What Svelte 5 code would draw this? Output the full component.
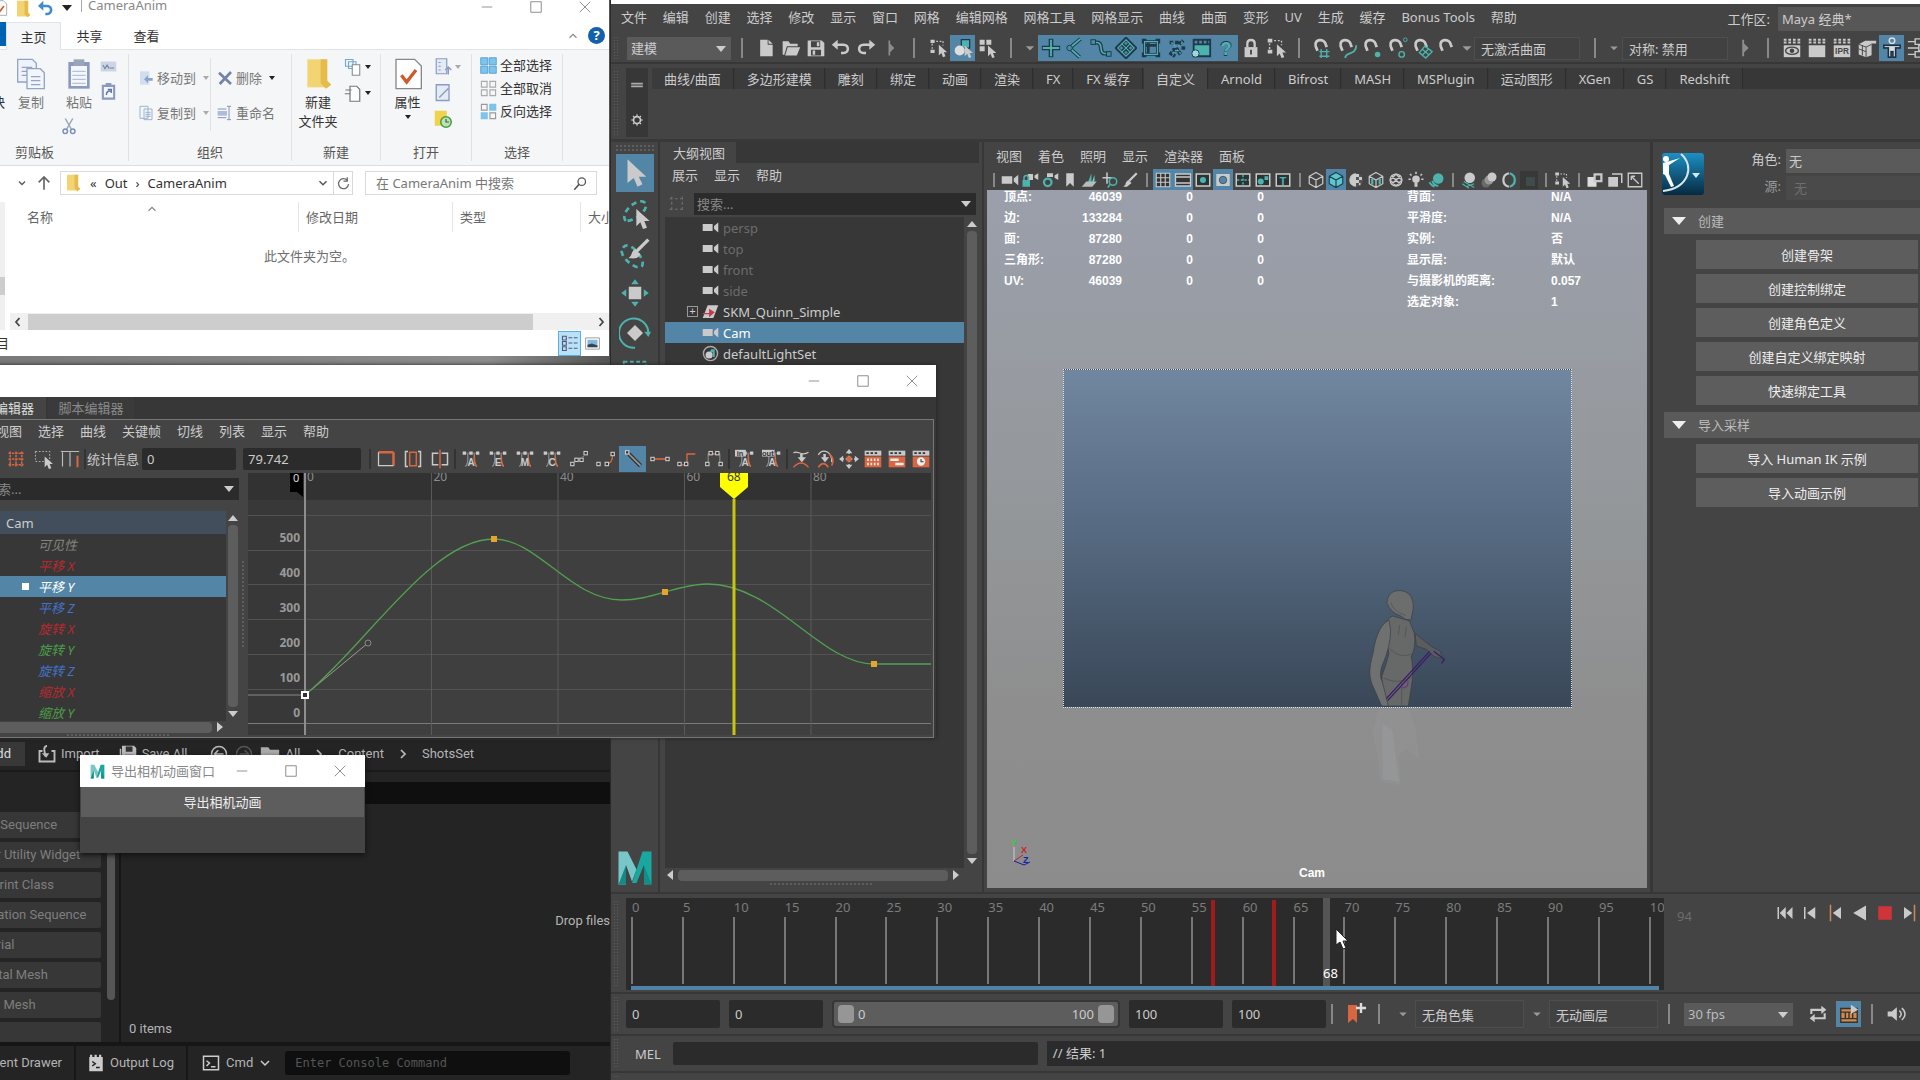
<script>
  const menus = ["文件", "编辑", "创建", "选择", "修改", "显示", "窗口", "网格", "编辑网格", "网格工具", "网格显示", "曲线", "曲面", "变形", "UV", "生成", "缓存", "Bonus Tools", "帮助"];
  const shelfTabs = ["曲线/曲面", "多边形建模", "雕刻", "绑定", "动画", "渲染", "FX", "FX 缓存", "自定义", "Arnold", "Bifrost", "MASH", "MSPlugin", "运动图形", "XGen", "GS", "Redshift"];

  const fileTools = ["sep", "newFile", "open", "save", "undo", "redo", "fold", "sep", "selHier", "*selObj", "selComp", "sep", "drop"];
  const maskTools = ["*plus", "*joint", "*curve", "*surface", "*deform", "*particle", "*render", "*question", "lock", "selHier", "sep"];
  const snapTools = ["magGrid", "magCurve", "magPoint", "magCenter", "magPlane", "magnet", "drop"];
  const renderTools = ["fold", "sep", "clapEye", "clap", "clapIpr", "cubeTool", "*human", "sliders"];
  const viewTools = [
    "sep", "camera", "camLock", "camGear", "bookmark", "plane", "panZoom", "pencil",
    "sep", "*gridBox", "*film", "resGate", "*gateMask", "fieldChart", "safe", "title",
    "sep", "wire", "*solid", "half", "texCube", "checker", "bulb", "shadow",
    "sep", "ao", "motion", "aa", "darkBox", "sep", "selHier", "sep", "layersA", "layersB", "expose",
  ];
  const graphTools = [
    "sep", "gBox", "gBracket", "gCenter", "sep", "tA", "tE", "tM", "tC", "spline", "clampT", "*linear", "flat", "stepT", "plateau",
    "sep", "inA", "outA", "sep", "buffer", "swap", "moveKey", "dopeA", "dopeB", "dopeC",
  ];

  const outliner = [
    { name: "persp", icon: "camera", dim: true },
    { name: "top", icon: "camera", dim: true },
    { name: "front", icon: "camera", dim: true },
    { name: "side", icon: "camera", dim: true },
    { name: "SKM_Quinn_Simple", icon: "mesh", plus: true },
    { name: "Cam", icon: "camera", selected: true },
    { name: "defaultLightSet", icon: "lightSet" },
  ];

  const channels = [
    { name: "可见性", color: "#85857c" },
    { name: "平移 X", color: "#b52a30" },
    { name: "平移 Y", color: "#ffffff", selected: true },
    { name: "平移 Z", color: "#4472c8" },
    { name: "旋转 X", color: "#b52a30" },
    { name: "旋转 Y", color: "#4c9c48" },
    { name: "旋转 Z", color: "#4472c8" },
    { name: "缩放 X", color: "#b52a30" },
    { name: "缩放 Y", color: "#4c9c48" },
  ];

  const polyStats = [
    ["顶点:", "46039"],
    ["边:", "133284"],
    ["面:", "87280"],
    ["三角形:", "87280"],
    ["UV:", "46039"],
  ];
  const objStats = [
    ["背面:", "N/A"],
    ["平滑度:", "N/A"],
    ["实例:", "否"],
    ["显示层:", "默认"],
    ["与摄影机的距离:", "0.057"],
    ["选定对象:", "1"],
  ];

  const createButtons = ["创建骨架", "创建控制绑定", "创建角色定义", "创建自定义绑定映射", "快速绑定工具"];
  const importButtons = ["导入 Human IK 示例", "导入动画示例"];
  const assetTypes = ["Level Sequence", "Editor Utility Widget", "Blueprint Class", "Animation Sequence", "Material", "Skeletal Mesh", "Static Mesh", ""];

  // time slider
  const frames = Array.from({ length: 21 }, (_, i) => i * 5);
  const keys = [57, 63];
  const current = 68;
  const at = (frame) => (frame / 101) * 100;

  // graph editor grid
  const graphTimes = [0, 20, 40, 60, 80];
  const graphValues = [500, 400, 300, 200, 100, 0];
  const graphLines = [42, 77, 111, 146, 181, 216];

  const W = "#cacaca";
  const T = "#4db3ae";
  const O = "#d96640";
  const D = "#20384a";
  const line = (d, c = W, w = 2) => `<path d="${d}" fill="none" stroke="${c}" stroke-width="${w}"/>`;
  const fill = (d, c = W) => `<path d="${d}" fill="${c}"/>`;
  const text = (t, x, y, s, c = W) => `<text x="${x}" y="${y}" font-size="${s}" font-weight="700" fill="${c}" font-family="Liberation Sans, sans-serif" text-anchor="middle">${t}</text>`;
  const arrowAt = (x, y) => fill(`M${x} ${y}v13l3-3 2 5 3-1-2-5h4z`);
  const mag = line("M6 15 4 10C2 2 13 1 15 8l1 3", W, 3);
  const tangent = (l) => line("M5 21Q9 19 8 6M19 21Q15 19 16 6", "#8c8c8c", 1.5) + line("M19 21Q16 18 16 7", O, 1.5) + line("M3 5H21", "#999", 1) + fill("M2 3h4v4H2zM10 3h4v4h-4zM18 3h4v4h-4z") + text(l, 12, 20, 12);
  const knot = (x, y) => `<rect x="${x}" y="${y}" width="4" height="4" fill="#333" stroke="#ccc" stroke-width="1.3"/>`;
  const clapTop = fill("M3 9h18v13H3z") + line("M3 6h18M3 3h18", W, 2).replace("/>", ' stroke-dasharray="3 2"/>');
  const cube = line("M12 2 21 7v10l-9 5-9-5V7zM3 7l9 5 9-5M12 12v10", W, 1.6);
  const box = (c) => `<rect x="3" y="4" width="18" height="16" fill="#2a3434" stroke="${c}" stroke-width="2"/>`;
  const dope = fill("M2 2h20v6H2z") + fill("M2 9h20v13H2z", O) + fill("M4 4h3v2H4zM9 4h3v2H9zM14 4h3v2h-3z", "#333");
  const cam = fill("M1 7h14v10H1zM17 10l6-5v14l-6-5z");

  const icons = {
    newFile: fill("M5 2h9v6h6v14H5zM15 2l5 5h-5z"),
    open: fill("M2 4h7l2 3h9v3H7L4 20H2zM8 11h15l-4 10H5z"),
    save: fill("M2 3h17l3 3v16H2z") + fill("M6 4h11v7H6zM6 14h12v7H6z", "#444") + fill("M13 5h3v5h-3zM8 15h3v5H8z"),
    undo: line("M6 8h9c7 0 7 10 0 10h-3", W, 3) + fill("M8 2v12L1 8z"),
    redo: line("M18 8H9c-7 0-7 10 0 10h3", W, 3) + fill("M16 2v12l7-6z"),
    drop: fill("M7 10h10l-5 5z", "#999"),
    fold: fill("M9 3h2v18H9zM11 7l5 5-5 5z", "#8c8c8c"),
    selHier: fill("M3 2h5v4H3zM3 14h5v4H3z") + line("M10 4h8v5M5 7v6", W, 1.5).replace("/>", ' stroke-dasharray="2 2"/>') + arrowAt(13, 8),
    selObj: fill("M10 2h10v10H10z", T) + line("M10 2h10v10H10z", D, 1.5) + `<circle cx="8" cy="15" r="6" fill="#ddd"/>` + arrowAt(14, 9),
    selComp: fill("M2 2h6v6H2zM10 2h6v6h-6zM2 10h6v6H2z") + arrowAt(12, 9),
    plus: line("M12 2v20M2 12h20", D, 5) + line("M12 3v18M3 12h18", T, 2),
    joint: line("M17 2 5 12l11 10", D, 4) + line("M17 2 5 12l11 10", T, 2) + `<circle cx="5" cy="12" r="3" fill="#3f92a0" stroke="${D}"/>`,
    curve: line("M2 6h6c7 0 1 12 8 12h6", D, 4.5) + line("M2 6h6c7 0 1 12 8 12h6", T, 1.8) + `<rect x="1" y="3" width="5" height="5" fill="#3f92a0" stroke="${D}"/><rect x="18" y="16" width="5" height="5" fill="#3f92a0" stroke="${D}"/>`,
    surface: line("M12 2 22 12 12 22 2 12zM7 7l10 10M17 7 7 17", D, 4) + line("M12 3 21 12 12 21 3 12zM7 7l10 10M17 7 7 17", T, 1.2),
    deform: line("M5 5h14v14H5zM5 9h14M9 5v14", D, 3) + fill("M2 2h5v5H2zM17 2h5v5h-5zM2 17h5v5H2zM17 17h5v5h-5z", D) + line("M5 5h14v14H5z", T, 1.2),
    particle: line("M5 6h5M8 14h6M15 8l5-4M17 19l-5-7M5 17l6 4M18 12h4M13 4v5", D, 4).replace("/>", ' stroke-dasharray="4 1"/>') + line("M7 6l5 5M8 18l6-5M19 6l-5 5M17 18l-4-4", T, 1.6).replace("/>", ' stroke-dasharray="2 2"/>'),
    render: fill("M4 8h18v13H4z", T) + line("M4 3h18v18H4zM4 8h18M9 3v5M14 3v5M19 3v5", D, 2) + `<circle cx="6" cy="18" r="4" fill="#9ed8dd" stroke="${D}"/>`,
    question: text("?", 12, 21, 24, D) + text("?", 12, 20, 20, T),
    lock: line("M8 11V7c0-5 8-5 8 0v4", W, 2.5) + fill("M5 11h14v11H5z") + fill("M11 14h2v5h-2z", "#444"),
    magnet: mag,
    magGrid: mag + line("M10 13v10M16 13v10M8 16h11M8 21h11", T, 1.5),
    magCurve: mag + line("M9 23c0-8 12-2 12-14", T, 2),
    magPoint: mag + `<circle cx="17" cy="19" r="3" fill="${T}"/>`,
    magCenter: mag + `<circle cx="16" cy="19" r="3" fill="none" stroke="${T}" stroke-width="1.5"/><circle cx="20" cy="3" r="2" fill="none" stroke="${T}"/>`,
    magPlane: mag + line("M14 10l8 6-7 7-7-6zM18 13l-7 7M11 13l8 7", T, 1.5),
    clap: clapTop,
    clapEye: clapTop + `<ellipse cx="12" cy="15" rx="7" ry="4" fill="none" stroke="#444" stroke-width="1.5"/><circle cx="12" cy="15" r="2.5" fill="#444"/>`,
    clapIpr: clapTop + text("IPR", 12, 19, 9, "#444"),
    cubeTool: fill("M3 8l7-4h12v3h-5v13l-6 2-8-3z") + line("M3 8l8 3v11M3 13l8 3M7 9v11M11 11l6-3", "#444", 1),
    human: `<circle cx="12" cy="4" r="3" fill="none" stroke="#ddd" stroke-width="1.6"/>` + line("M3 9h18v3h-5v10h-3v-6h-2v6H8V12H3z", "#1d2f3c", 1.6) + fill("M4 10h16v1h-5v10h-1v-6h-4v6H9V11H4z", "#ddd"),
    sliders: line("M2 5h8M18 5h6M2 12h12M2 19h8M18 19h6", W, 1.5) + line("M10 2h8v6h-8zM14 9h8v6h-8zM10 16h8v6h-8z", W, 1.5),
    camera: cam,
    camLock: fill("M9 4h7v8H9zM18 6l5-3v9l-5-3z") + line("M4 12V9c0-4 6-4 6 0v3", T, 2) + fill("M2 12h10v9H2z", T),
    camGear: fill("M8 3h8v5H8zM18 6l5-3v9l-5-3z") + `<circle cx="9" cy="15" r="5" fill="none" stroke="${T}" stroke-width="3"/>`,
    bookmark: fill("M7 3h10v18l-5-5-5 5z"),
    plane: fill("M8 18 14 3v14z", T) + fill("M1 21l6-7h14l-6 7z", "#bbb") + fill("M13 20l5-7V5z", "#80cfc9"),
    panZoom: line("M8 2v15M2 9h13", W, 2) + `<circle cx="16" cy="14" r="5" fill="#444" stroke="${T}" stroke-width="2"/>` + line("M12 18l-3 4", T, 2),
    pencil: line("M21 3 11 13", W, 3) + fill("M10 12l4 4-6 5H3l3-3c0-3 2-5 4-6z"),
    gridBox: `<rect x="3" y="3" width="18" height="18" fill="#333"/>` + line("M3 3h18v18H3zM9 3v18M15 3v18M3 9h18M3 15h18", W, 1.5),
    film: `<rect x="2" y="4" width="20" height="16" fill="#333"/>` + line("M2 4h20v16H2zM3 8h18M3 16h18", W, 1.8),
    resGate: box(W) + `<circle cx="12" cy="12" r="4" fill="${T}"/>`,
    gateMask: fill("M3 4h18v16H3z") + `<circle cx="12" cy="12" r="5" fill="#4e86ad" stroke="#444"/>`,
    fieldChart: box(W) + line("M12 5v14M4 12h16", T, 2).replace("/>", ' stroke-dasharray="3 2"/>'),
    safe: box(W) + fill("M14 7h5v5h-5z", T) + `<circle cx="9" cy="14" r="4" fill="${T}"/>`,
    title: box(W) + text("T", 12, 18, 15, T),
    wire: cube,
    solid: fill("M12 2 21 7v10l-9 5-9-5V7z", "#5fc4cc") + line("M12 2 21 7v10l-9 5-9-5V7zM3 7l9 5 9-5M12 12v10", "#17424f", 1.5),
    half: `<circle cx="12" cy="12" r="9" fill="#555"/>` + fill("M12 3a9 9 0 0 0 0 18z") + fill("M12 4h4v4h-4zM16 8h4v4h-4zM12 12h4v4h-4zM16 16h2v3h-2z"),
    texCube: cube + line("M7 10v8M17 10v8", T, 3),
    checker: `<circle cx="12" cy="12" r="8" fill="none" stroke="${W}" stroke-width="1.5"/>` + line("M6 6l12 12M4 12l8 8M12 4l8 8M18 6 6 18M12 4 4 12M20 12l-8 8", W, 2),
    bulb: `<circle cx="12" cy="11" r="5" fill="${W}"/>` + fill("M10 16h4v5h-4z") + line("M12 1v3M2 11h3M19 11h3M4 4l2 2M20 4l-2 2", W, 2),
    shadow: `<circle cx="15" cy="10" r="7" fill="${T}"/>` + line("M7 13c1 4 3 6 8 7M3 15c2 3 4 5 7 6", T, 2.5),
    ao: `<circle cx="13" cy="9" r="7" fill="${W}"/>` + line("M5 14l14 8M3 17l9 6M8 21l11-4", T, 1.5),
    motion: `<circle cx="8" cy="16" r="6" fill="#6a6a6a"/><circle cx="12" cy="12" r="6" fill="#969696"/><circle cx="16" cy="8" r="6" fill="${W}"/>`,
    aa: line("M12 3C2 5 2 19 12 21", W, 3) + line("M13 3c9 3 9 15 0 18", T, 3),
    darkBox: fill("M0 0h24v24H0z", "#383838") + fill("M8 8h12v12H8z", "#404b4b"),
    layersA: fill("M2 8h12v13H2z", "#ddd") + fill("M10 3h12v12H10z") + fill("M13 6h6v6h-6z", "#444"),
    layersB: line("M8 4h13v12", W, 2) + fill("M3 8h13v13H3z"),
    expose: line("M3 3h18v18H3zM7 7l10 10M7 7h5M7 7v5", W, 1.8),
    mesh: fill("M8 3h15l-7 18H1z") + fill("M1 14h9V8l8 5-8 7v-4H1z", "#c33b4c"),
    lightSet: `<circle cx="12" cy="12" r="10" fill="none" stroke="#aaa" stroke-width="2"/><circle cx="10" cy="14" r="5" fill="#ccc"/>` + fill("M13 6h5v11h-3v-7h-4z", T),
    lasso: line("M5 18C0 12 14 0 19 4s-6 14-14 14", T, 2).replace("/>", ' stroke-dasharray="4 3"/>') + arrowAt(13, 9),
    paintSel: line("M3 8c5-7 18 10 14 14S-2 13 3 8", T, 2).replace("/>", ' stroke-dasharray="4 3"/>') + line("M22 2 13 11", W, 2.5) + fill("M12 9l4 4c-2 4-5 3-9 3 3-2 2-5 5-7z"),
    move: fill("M7 7h10v10H7z") + fill("M12 1l3 4H9zM12 23l3-4H9zM1 12l4-3v6zM23 12l-4-3v6z", T),
    rotate: fill("M12 6l6 6-6 6-6-6z") + line("M12 23A11 11 0 1 1 22 12", T, 1.5) + fill("M19 11h5l-2 4z", T),
    scale: line("M3 3h18v18H3z", T, 1.5).replace("/>", ' stroke-dasharray="3 2"/>'),
    cursor: fill("M6 1v19l5-4 3 7 4-2-3-6h6z"),
    frameSel: line("M5 2v20M19 2v20M2 5h20M2 19h20", "#707070", 1.5).replace("/>", ' stroke-dasharray="4 3"/>'),
    gear: `<circle cx="12" cy="12" r="6" fill="none" stroke="${W}" stroke-width="3"/>` + line("M12 2v4M12 18v4M2 12h4M18 12h4M5 5l3 3M16 16l3 3M19 5l-3 3M5 19l3-3", W, 2),
    bars: fill("M2 8h20v3H2zM2 13h20v3H2z", "#aaa"),
    gBox: line("M3 4h18M21 4v16", O, 3) + line("M3 4v16h18", W, 1.5),
    gBracket: line("M6 3H3v18h3M18 3h3v18h-3", W, 1.8) + line("M8 4h8v16H8z", O, 1.8),
    gCenter: line("M10 5H3v14h7M14 5h7v14h-7", W, 1.8) + line("M12 1v22", O, 1.8),
    tA: tangent("A"),
    tE: tangent("E"),
    tM: tangent("M"),
    tC: tangent("C"),
    spline: line("M4 18l6-6h5l5-7", "#999", 1.2).replace("/>", ' stroke-dasharray="2 2"/>') + knot(2, 16) + knot(7, 11) + knot(13, 11) + knot(18, 3),
    clampT: line("M12 18c6 0 8-4 8-12", O, 1.5) + knot(1, 16) + knot(11, 16) + knot(18, 4),
    linear: line("M7 6l14 14", "#333", 5) + line("M7 6l14 14", "#999", 2) + knot(3, 2),
    flat: line("M4 12h16", O, 2) + knot(1, 10) + knot(19, 10),
    stepT: line("M4 19h8V6h10", O, 1.6) + knot(1, 16) + knot(9, 16),
    plateau: line("M5 19V6h14v13", "#888", 1.4) + line("M8 6h8", O, 1.6) + knot(2, 16) + knot(6, 3) + knot(14, 3) + knot(18, 16),
    inA: tangent("A") + fill("M0 1h13v8H0z", W) + text("in", 6, 8, 9, "#333"),
    outA: tangent("A") + fill("M0 1h15v8H0z", W) + text("out", 7, 8, 9, "#333"),
    buffer: line("M3 5c4-5 9 5 18-1", W, 1.4) + fill("M11 6h3v4h4l-5 6-5-6h3z") + line("M3 22c6-7 12-7 18 0", O, 1.6),
    swap: line("M4 7c4-7 14-6 16 5v4", W, 1.5) + fill("M10 6h3v4h4l-5 6-5-6h3z") + line("M4 22c4-6 8-6 12 0M17 6c5 4 6 8 3 14", O, 2),
    moveKey: line("M12 3v18M3 12h18", W, 1.6).replace("/>", ' stroke-dasharray="3 2"/>') + fill("M12 0l4 5H8zM12 24l4-5H8zM0 12l5-4v8zM24 12l-5-4v8z") + fill("M9 9h6v6H9z", O),
    dopeA: dope + line("M5 13h14M5 18h14", "#eee", 3).replace("/>", ' stroke-dasharray="2 2"/>'),
    dopeB: dope + line("M4 13h10M10 18h10", "#eee", 3),
    dopeC: dope + `<circle cx="12" cy="15" r="5" fill="#eee"/>` + line("M12 12v3h3", "#555", 1.5),
    region: line("M5 3v18M12 3v18M19 3v18M3 5h18M3 12h18M3 19h18", O, 1.8).replace("/>", ' stroke-dasharray="3 1"/>'),
    marquee: line("M3 3h17v12H3z", "#aaa", 1.3).replace("/>", ' stroke-dasharray="2 2"/>') + arrowAt(14, 9),
    posts: line("M1 3h22M3 4v17M12 4v17", "#bbb", 1.4) + line("M21 8v14", O, 2.4),
    loop: line("M4 12V7h13M20 11v6H7", W, 2.5) + fill("M16 2v10l6-5zM8 12v10l-6-5z"),
    clip: fill("M3 6h18v15H3z", "#d08a4c") + line("M3 6h18v15H3zM3 10h18M3 17h18M8 10v7M12 10v7M16 10v7", "#38322c", 1.5) + fill("M14 2l8 5-8 5z"),
    speaker: fill("M2 9h5l6-5v16l-6-5H2z") + line("M16 8c3 2 3 6 0 8M19 5c5 4 5 10 0 14", W, 1.8),
    mark: fill("M4 3h9v18l-4-4-5 4z", O) + line("M17 1v10M12 6h10", "#ddd", 2.4),
    first: fill("M2 4h2v16H2zM13 4v16l-8-8zM22 4v16l-8-8z"),
    prev: fill("M4 4h2v16H4zM19 4v16L8 12z"),
    prevKey: fill("M5 1h2v22H5z", "#c98a62") + fill("M20 4v16L9 12z"),
    back: fill("M20 2v20L3 12z"),
    stop: fill("M3 3h18v18H3z", "#d13438"),
    nextKey: fill("M17 1h2v22h-2z", "#c98a62") + fill("M4 4v16l11-8z"),
    min: line("M3 12h18", "#888", 1.5),
    max: line("M3 3h18v18H3z", "#888", 1.6),
    close: line("M3 3l18 18M21 3 3 21", "#888", 1.6),
    down: line("M6 9l6 6 6-6", "#555", 2.5),
    downLight: line("M4 8l8 8 8-8", "#ccc", 3),
    up: line("M6 15l6-6 6 6", "#888", 2),
    right: line("M8 4l8 8-8 8", "#bbb", 3.5),
    folder: fill("M4 1h14v21H4z", "#f2d472") + fill("M14 1h5v16l3 3-4 3-4-4z", "#e5bb4b"),
    wundo: line("M4 9h10c8 0 7 12 0 12h-3", "#3f8bd0", 4) + fill("M8 1v15L0 9z", "#3f8bd0"),
    copy: fill("M2 1h11l4 4v14H2z", "#eef3fb") + line("M2 1h11l3 3v14H2zM5 7h8M5 10h8M5 13h8", "#93a4c4", 1) + fill("M9 8h10l3 3v12H9z", "#f2f6fc") + line("M9 8h10l3 3v12H9zM12 14h7M12 17h7M12 20h7", "#93a4c4", 1),
    paste: fill("M4 3h16v20H4z", "#8b9ac0") + fill("M6 6h12v15H6z", "#f4f7fc") + fill("M8 1h8v5H8z", "#9aa5b8") + line("M7 10h10M7 13h10M7 16h10M7 19h10", "#b5c2dd", 1),
    pathBox: fill("M1 5h22v14H1z", "#ccd5e4") + line("M4 10l3 5 3-5 3 5M14 14h6", "#7283a6", 1.5),
    shortcut: line("M4 4h16v18H4z", "#8b9ac0", 3) + fill("M8 0h8v5H8z", "#8b9ac0") + line("M9 17c0-4 2-6 6-6M11 9h5v5", "#5c77b0", 2),
    scissors: line("M7 2l8 14M17 2 9 16", "#9aa5bc", 2) + `<circle cx="7" cy="19" r="3" fill="none" stroke="#7a8fbc" stroke-width="2"/><circle cx="17" cy="19" r="3" fill="none" stroke="#7a8fbc" stroke-width="2"/>`,
    moveTo: fill("M3 2h14v20H3z", "#d2deef") + fill("M22 12h-7V8l-6 6 6 6v-4h7z", "#8aa3cc"),
    copyTo: line("M3 2h12v18H3zM9 6h12v16H9z", "#9fb2d2", 1.5) + line("M11 11h8M11 14h8M11 17h8", "#9fb2d2", 1.5),
    del: line("M3 4l18 17M21 3 4 21", "#7484a8", 4),
    rename: fill("M1 9h14v7H1z", "#aebcd8") + line("M18 2v20M15 2h6M15 22h6M1 6h13M1 19h13", "#8494b5", 1.5),
    newItem: line("M2 2h10v9H2zM6 5h10v9H6z", "#6faad0", 1.5) + fill("M11 9h10v14H11z", "#fff") + line("M11 9h10v14H11z", "#888", 1.4),
    easy: fill("M8 3h13v20H8z", "#fff") + line("M8 3h9l4 4v16H8zM2 8h8M1 13h8", "#777", 1.6),
    props: fill("M3 1h14l5 5v17H3z", "#fff") + line("M3 1h14l5 5v17H3z", "#888", 1) + line("M7 13l4 5 7-9", "#cf5a2a", 2.5),
    openWith: fill("M3 1h14v20H3z", "#e3ebf5") + line("M3 1h14v20H3zM6 6h3M6 11h3M6 16h3", "#8b9cc0", 1.6) + line("M19 22V12M15 16l4-4 4 4", "#8b9cc0", 2),
    editDoc: fill("M3 1h17v21H3z", "#e3ebf5") + line("M3 1h17v21H3zM7 18 19 6", "#8b9cc0", 1.8),
    history: fill("M1 1h16v20H1z", "#f2d14b") + `<circle cx="16" cy="16" r="7" fill="#b9e6b0" stroke="#4a9a46" stroke-width="2"/>` + line("M16 12v4h4", "#555", 1.6),
    selAll: fill("M1 1h10v10H1zM13 1h10v10H13zM1 13h10v10H1zM13 13h10v10H13z", "#7cc4ee") + line("M1 1h10v10H1zM13 1h10v10H13zM1 13h10v10H1zM13 13h10v10H13z", "#3c8fc4", 1),
    selNone: line("M2 2h8v8H2zM14 2h8v8h-8zM2 14h8v8H2zM14 14h8v8h-8z", "#aaa", 1.6),
    selInv: line("M2 2h8v8H2zM14 14h8v8h-8z", "#999", 1.6) + fill("M13 1h10v10H13zM1 13h10v10H1z", "#7cc4ee"),
    upArrow: line("M12 22V3M4 11l8-8 8 8", "#666", 2.5),
    refresh: line("M18 7a8 8 0 1 0 2 6M18 2v6h-6", "#666", 2),
    glass: `<circle cx="14" cy="9" r="6" fill="none" stroke="#555" stroke-width="2"/>` + line("M10 13 2 22", "#555", 2.5),
    caretL: line("M15 4l-7 8 7 8", "#444", 3.5),
    caretR: line("M9 4l7 8-7 8", "#444", 3.5),
    details: line("M2 3h5v5H2zM2 10h5v5H2zM2 17h5v5H2zM10 5h5M17 5h5M10 12h5M17 12h5M10 19h5M17 19h5", "#557", 1.5),
    thumbs: line("M1 3h22v18H1z", "#999", 1.5) + fill("M4 6h16v12H4z", "#86b6d8") + fill("M4 14l7-2 9 3v3H4z", "#345"),
    import: line("M6 8H2v14h20V8h-4M12 1c-5 1-4 5-2 14", "#bbb", 2.5) + fill("M5 11h10l-4 6z", "#bbb"),
    disk: fill("M4 1h16l3 3v17H4z", "#bbb") + fill("M9 2h9v7H9zM8 13h11v7H8z", "#333") + fill("M1 5h2v18h16v1H1z", "#bbb"),
    circleL: `<circle cx="12" cy="12" r="10" fill="none" stroke="#bbb" stroke-width="2"/>` + line("M18 12H7M11 7l-5 5 5 5", "#bbb", 2.2),
    circleR: `<circle cx="12" cy="12" r="10" fill="none" stroke="#555" stroke-width="2"/>` + line("M6 12h11M13 7l5 5-5 5", "#555", 2.2),
    ufolder: fill("M1 4h9l2 3h11v14H1z", "#aaa"),
    log: fill("M3 4h18v19H3zM4 1h3v3H4zM10 1h3v3h-3zM16 1h3v3h-3z", "#ccc") + line("M7 10l4 3-4 3M12 18h5", "#222", 2),
    term: line("M2 3h20v18H2zM6 9l4 3-4 4M12 17h6", "#ccc", 2),
    mLogo: fill("M1 1h6l6 12-3 8L6 10v13H1z", "#78c6c8") + fill("M23 1v22h-5V10l-5 12h-3l7-21z", "#1aa79f") + fill("M1 23l5-13v13z", "#128a86") + fill("M18 10l5 13h-5z", "#0f8f88"),
  };
</script>

{#snippet icon(name, size = 20)}
  <svg class="ico" viewBox="0 0 24 24" width={size} height={size} aria-hidden="true">{@html icons[name]}</svg>
{/snippet}

{#snippet tools(list, size)}
  {#each list as t}
    {#if t === "sep"}
      <span class="sep"></span>
    {:else}
      <button class="tool" class:on={t[0] === "*"} aria-label={t.replace("*", "")}>{@render icon(t.replace("*", ""), size)}</button>
    {/if}
  {/each}
{/snippet}

{#snippet caption()}
  <span class="caption">
    <button aria-label="minimize">{@render icon("min", 14)}</button>
    <button aria-label="maximize">{@render icon("max", 14)}</button>
    <button aria-label="close">{@render icon("close", 14)}</button>
  </span>
{/snippet}

<main class="desktop">
  <div class="backdrop"></div>

  <!-- Maya -->
  <section class="maya">
    <div class="menubar">
      <nav class="mainmenu">
        {#each menus as m}<button>{m}</button>{/each}
      </nav>
      <label class="workspace">工作区:
        <select><option>Maya 经典*</option></select>
      </label>
    </div>

    <div class="statusline">
      <span class="grip"></span>
      <span class="combo mode"><select aria-label="模式"><option>建模</option></select></span>
      {@render tools(fileTools, 20)}
      {@render tools(maskTools, 22)}
      {@render tools(snapTools, 22)}
      <input class="field" value="无激活曲面" aria-label="激活曲面" />
      <span class="sep"></span>
      {@render tools(["drop"], 18)}
      <input class="field" value="对称: 禁用" aria-label="对称" />
      {@render tools(renderTools, 22)}
    </div>

    <div class="shelf">
      <span class="grip"></span>
      <div class="shelfside">
        <button aria-label="shelf menu">{@render icon("bars", 14)}</button>
        <button aria-label="shelf options">{@render icon("gear", 14)}</button>
      </div>
      <nav class="shelftabs">
        {#each shelfTabs as t}<button class:active={t === "自定义"}>{t}</button>{/each}
      </nav>
    </div>

    <div class="work">
      <aside class="toolbox">
        <span class="dots"></span>
        <button class="on" aria-label="select">{@render icon("cursor", 30)}</button>
        <button aria-label="lasso">{@render icon("lasso", 32)}</button>
        <button aria-label="paint select">{@render icon("paintSel", 32)}</button>
        <button aria-label="move">{@render icon("move", 30)}</button>
        <button aria-label="rotate">{@render icon("rotate", 32)}</button>
        <button aria-label="scale">{@render icon("scale", 30)}</button>
        <span class="logo">{@render icon("mLogo", 36)}</span>
      </aside>

      <section class="outliner">
        <div class="paneltabs"><button>大纲视图</button></div>
        <nav class="submenu"><button>展示</button><button>显示</button><button>帮助</button></nav>
        <div class="search">
          {@render icon("frameSel", 18)}
          <span class="searchbox"><input placeholder="搜索..." aria-label="搜索" /><i class="tri"></i></span>
        </div>
        <div class="treewrap">
          <ul class="tree">
            {#each outliner as n}
              <li class:dim={n.dim} class:selected={n.selected}>
                <span class="expander">{#if n.plus}<b>+</b>{/if}</span>
                {@render icon(n.icon, 17)}
                <span>{n.name}</span>
              </li>
            {/each}
          </ul>
          <div class="vscroll"><i class="tri upward"></i><span></span><i class="tri"></i></div>
        </div>
        <div class="hscroll"><i class="tri leftward"></i><span></span><i class="tri rightward"></i></div>
        <span class="dots wide"></span>
      </section>

      <section class="view">
        <nav class="submenu"><button>视图</button><button>着色</button><button>照明</button><button>显示</button><button>渲染器</button><button>面板</button></nav>
        <div class="viewtools">{@render tools(viewTools, 18)}</div>
        <div class="canvas">
          <div class="hud">
            <table class="poly">
              <tbody>
                {#each polyStats as [label, n]}
                  <tr><th>{label}</th><td>{n}</td><td>0</td><td>0</td></tr>
                {/each}
              </tbody>
            </table>
            <table class="obj">
              <tbody>
                {#each objStats as [label, v]}
                  <tr><th>{label}</th><td>{v}</td></tr>
                {/each}
              </tbody>
            </table>
          </div>
          <div class="gate"></div>
          <svg class="figure" viewBox="0 0 450 690" aria-hidden="true">
            <g fill="#9a9c9d">
              <path d="M150 416h90l20 60 10 90-40-30-20 20 5 90-60-10-10-80-15-70z" opacity=".25" />
              <path d="M160 460l30 20 20 155-50-8z" opacity=".5" />
            </g>
            <g stroke="#3a3d40" stroke-width="2" fill="#666967">
              <path d="M190 138C170 150 162 165 165 185L180 250Q170 290 158 320L165 408H238L250 330Q252 270 246 262 262 230 256 190 245 160 240 152Z" />
              <path d="M180 150C150 165 138 210 132 250 118 300 122 320 128 340L158 408H178L160 335Q150 320 158 290 185 230 185 180Z" fill="#6e7170" />
              <path d="M174 100C174 70 195 60 215 62 245 64 256 90 252 120L246 150Q230 152 215 138 185 128 174 100Z" fill="#6b6e6c" />
              <path d="M258 190l50 40 26 14 6 22-24-6-24-22-30-10z" fill="#5a5c60" />
              <path d="M182 235c20 24 50 26 66 16M160 322c30 16 60 16 88 0M186 98c6 16 16 30 44 38M212 165l-4 30M232 170l-4 30M218 340v66" fill="none" opacity=".6" />
            </g>
            <path d="M302 244 172 386M306 250 176 392M314 244l32 24-8 12" fill="none" stroke="#3a1c68" stroke-width="4" />
            <path d="M236 330c4 22-10 26-20 20" fill="none" stroke="#6a3f7e" stroke-width="4" />
          </svg>
          <svg class="axis" viewBox="0 0 30 30" aria-hidden="true">
            <path d="M6 9v14" stroke="#ccc" /><path d="M6 23l9-6" stroke="#b23" /><path d="M6 23l10 4 6-3" stroke="#12a" fill="none" />
            <text x="3" y="8" fill="#3c4">Y</text><text x="13" y="15" fill="#c22">X</text><text x="15" y="25" fill="#12a">Z</text>
          </svg>
          <span class="camname">Cam</span>
        </div>
      </section>

      <aside class="humanik">
        <div class="ikhead">
          <svg viewBox="0 0 42 42" width="42" height="42" aria-hidden="true">
            <defs><linearGradient id="ik" x1="0" y1="0" x2="0" y2="1"><stop offset="0" stop-color="#1d8fc4" /><stop offset="1" stop-color="#062a40" /></linearGradient></defs>
            <rect width="42" height="42" rx="3" fill="url(#ik)" />
            <path d="M19 1c14 12 8 34-18 37" fill="none" stroke="#d8e6ee" stroke-width="2" />
            <circle cx="4" cy="6" r="3" fill="#fff" /><path d="M1 10l17-5-11 7v9l5 12-3 1-6-12-2-1z" fill="#fff" />
            <path d="M30 20h8l-4 5z" fill="#cfe8f4" />
          </svg>
          <label for="role">角色:</label><select id="role"><option>无</option></select>
          <label for="source" class="off">源:</label><select id="source" class="off" disabled><option>无</option></select>
        </div>
        <h3><i class="tri"></i>创建</h3>
        <div class="ikbuttons">{#each createButtons as b}<button>{b}</button>{/each}</div>
        <h3><i class="tri"></i>导入采样</h3>
        <div class="ikbuttons">{#each importButtons as b}<button>{b}</button>{/each}</div>
      </aside>
    </div>

    <div class="timerow">
      <span class="grip"></span>
      <div class="timeline">
        <div class="track">
          {#each frames as f}
            <span class="tick" style:left="{at(f)}%"></span>
            <span class="num" style:left="{at(f)}%">{f === 100 ? "10" : f}</span>
          {/each}
          {#each keys as k}<span class="key" style:left="{at(k)}%"></span>{/each}
          <span class="now" style:left="{at(current)}%"><b>{current}</b></span>
        </div>
        <svg class="pointer" viewBox="0 0 14 22" width="14" height="22" aria-hidden="true"><path d="M1 1v16l4-3 3 7 3-1-3-7h5z" fill="#fff" stroke="#222" /></svg>
      </div>
      <output class="frame">94</output>
      <div class="playback">
        {#each ["first", "prev", "prevKey", "back", "stop", "nextKey"] as p}<button aria-label={p}>{@render icon(p, 18)}</button>{/each}
      </div>
    </div>

    <div class="rangerow">
      <span class="grip"></span>
      <input class="numfield" value="0" aria-label="动画开始" />
      <input class="numfield" value="0" aria-label="播放开始" />
      <div class="range"><i></i><span>0</span><span class="end">100</span><i></i></div>
      <input class="numfield" value="100" aria-label="播放结束" />
      <input class="numfield" value="100" aria-label="动画结束" />
      <div class="rangetools">
        <span class="sep"></span>
        <button class="tool" aria-label="bookmark">{@render icon("mark", 24)}</button>
        <span class="sep"></span>
        {@render tools(["drop"], 18)}
        <input class="field" value="无角色集" aria-label="角色集" />
        {@render tools(["drop"], 18)}
        <input class="field" value="无动画层" aria-label="动画层" />
        <span class="sep"></span>
        <span class="combo fps"><select aria-label="帧速率"><option>30 fps</option></select></span>
        <button class="tool gapl" aria-label="loop">{@render icon("loop", 20)}</button>
        <button class="tool on" aria-label="cached playback">{@render icon("clip", 22)}</button>
        <span class="sep"></span>
        <button class="tool" aria-label="sound">{@render icon("speaker", 20)}</button>
      </div>
    </div>

    <div class="cmdrow">
      <span class="grip"></span>
      <label for="mel">MEL</label>
      <input id="mel" class="numfield" />
      <output>// 结果: 1</output>
    </div>
    <div class="helprow"><span class="grip"></span></div>
  </section>

  <!-- Unreal content browser -->
  <section class="unreal">
    <div class="utools">
      <button class="add">Add</button>
      <button>{@render icon("import", 18)}Import</button>
      <button class="saveall">{@render icon("disk", 18)}Save All</button>
      <button aria-label="back">{@render icon("circleL", 18)}</button>
      <button class="fwd" aria-label="forward">{@render icon("circleR", 18)}</button>
      <button>{@render icon("ufolder", 20)}All</button>
      {@render icon("right", 12)}
      <button>Content</button>
      {@render icon("right", 12)}
      <button>ShotsSet</button>
    </div>
    <div class="ubody">
      <div class="usources">
        <div class="ulist">{#each assetTypes as a}<button>{a}</button>{/each}</div>
        <span class="uscroll"></span>
      </div>
      <div class="uassets">
        <div class="usearch"></div>
        <p class="udrop">Drop files</p>
        <p class="uitems">0 items</p>
      </div>
    </div>
    <div class="ustatus">
      <button class="drawer">Content Drawer</button>
      <button>{@render icon("log", 18)}Output Log</button>
      <button>{@render icon("term", 18)}Cmd{@render icon("downLight", 12)}</button>
      <input placeholder="Enter Console Command" aria-label="console" />
    </div>
  </section>

  <!-- File explorer -->
  <section class="explorer">
    <header class="etitle">
      {@render icon("props", 16)}
      {@render icon("folder", 18)}
      {@render icon("wundo", 16)}
      <i class="tri dark"></i>
      <span class="bar"></span>
      <span class="ename">CameraAnim</span>
      {@render caption()}
    </header>
    <nav class="etabs">
      <span class="filetab"></span>
      <button class="active">主页</button><button>共享</button><button>查看</button>
      <span class="ehelp">{@render icon("up", 14)}<b>?</b></span>
    </nav>
    <div class="ribbon">
      <div class="group clipg">
        <div class="gbody">
          <span class="pin">快</span>
          <button class="big faded">{@render icon("copy", 32)}复制</button>
          <div class="pastecol">
            <button class="big faded">{@render icon("paste", 32)}粘贴</button>
            {@render icon("scissors", 18)}
          </div>
          <div class="smallcol">{@render icon("pathBox", 17)}{@render icon("shortcut", 17)}</div>
        </div>
        <small>剪贴板</small>
      </div>
      <div class="group orgg">
        <div class="gbody">
          <div class="pair faded">
            <button>{@render icon("moveTo", 16)}移动到<i class="tri tiny"></i></button>
            <button>{@render icon("copyTo", 16)}复制到<i class="tri tiny"></i></button>
          </div>
          <div class="pair faded second">
            <button>{@render icon("del", 16)}删除<i class="tri tiny dark"></i></button>
            <button>{@render icon("rename", 16)}重命名</button>
          </div>
        </div>
        <small>组织</small>
      </div>
      <div class="group newg">
        <div class="gbody">
          <button class="big">{@render icon("folder", 32)}<span>新建<br />文件夹</span></button>
          <div class="smallcol">
            <span>{@render icon("newItem", 18)}<i class="tri tiny dark"></i></span>
            <span>{@render icon("easy", 18)}<i class="tri tiny dark"></i></span>
          </div>
        </div>
        <small>新建</small>
      </div>
      <div class="group openg">
        <div class="gbody">
          <button class="big">{@render icon("props", 32)}属性<i class="tri tiny dark"></i></button>
          <div class="smallcol">
            <span>{@render icon("openWith", 18)}<i class="tri tiny"></i></span>
            {@render icon("editDoc", 18)}
            {@render icon("history", 18)}
          </div>
        </div>
        <small>打开</small>
      </div>
      <div class="group selg">
        <div class="gbody rows">
          <button>{@render icon("selAll", 17)}全部选择</button>
          <button>{@render icon("selNone", 17)}全部取消</button>
          <button>{@render icon("selInv", 17)}反向选择</button>
        </div>
        <small>选择</small>
      </div>
    </div>
    <div class="eaddr">
      {@render icon("down", 12)}
      {@render icon("upArrow", 16)}
      <div class="path">
        {@render icon("folder", 18)}
        <span>«</span><a href="#out">Out</a><span>›</span><a href="#cam">CameraAnim</a>
        <span class="pathend">{@render icon("down", 14)}</span>
        <button aria-label="refresh">{@render icon("refresh", 15)}</button>
      </div>
      <div class="esearch"><input placeholder="在 CameraAnim 中搜索" aria-label="搜索文件" />{@render icon("glass", 15)}</div>
    </div>
    <div class="efiles">
      <div class="enav"><span></span></div>
      <div class="elist">
        <div class="cols"><span>名称{@render icon("up", 14)}</span><span>修改日期</span><span>类型</span><span>大小</span></div>
        <p>此文件夹为空。</p>
        <div class="escroll">{@render icon("caretL", 12)}<span></span>{@render icon("caretR", 12)}</div>
      </div>
    </div>
    <footer>
      <span>目</span>
      <button class="on" aria-label="details">{@render icon("details", 18)}</button>
      <button aria-label="thumbnails">{@render icon("thumbs", 15)}</button>
    </footer>
  </section>

  <!-- Graph editor -->
  <section class="graphed">
    <header>{@render caption()}</header>
    <div class="gtabs"><button class="active">编辑器</button><button>脚本编辑器</button></div>
    <div class="gpanel">
      <nav class="gmenu">
        {#each ["视图", "选择", "曲线", "关键帧", "切线", "列表", "显示", "帮助"] as m}<button>{m}</button>{/each}
      </nav>
      <div class="gtools">
        {@render tools(["region", "marquee", "posts"], 20)}
        <span class="sep"></span>
        <label for="stat">统计信息</label>
        <input id="stat" class="stat" value="0" />
        <input class="stat wide" value="79.742" aria-label="值" />
        {@render tools(graphTools, 20)}
      </div>
      <div class="gmain">
        <div class="gleft">
          <span class="searchbox"><input placeholder="索..." aria-label="搜索通道" /><i class="tri"></i></span>
          <div class="treewrap">
            <ul class="chans">
              <li class="root">Cam</li>
              {#each channels as c}
                <li class:selected={c.selected} style:color={c.color}><i></i><em>{c.name}</em></li>
              {/each}
            </ul>
            <div class="vscroll"><i class="tri upward"></i><span></span><i class="tri"></i></div>
          </div>
          <div class="hscroll"><span></span><i class="tri rightward"></i></div>
          <span class="dots wide"></span>
        </div>
        <span class="splitter"></span>
        <svg class="graph" viewBox="0 0 683 262" aria-label="曲线图">
          <rect width="683" height="262" fill="#3f3f3f" />
          <rect width="56" height="262" fill="#383838" />
          <rect width="683" height="27" fill="#323232" />
          {#each graphLines as y}<path d="M0 {y}.5H683" stroke="#525252" />{/each}
          <path d="M0 250.5H683" stroke="#7a7a7a" />
          {#each graphTimes as t}
            <path d="M{57 + t * 6.325} 0V262" stroke={t ? "#5a5a5a" : "#8e8e8e"} stroke-width={t ? 1 : 2} />
            <text x={59 + t * 6.325} y="8" class="gnum">{t}</text>
          {/each}
          {#each graphValues as v, i}<text x="52" y={69 + i * 35} class="gval">{v}</text>{/each}
          <path d="M42 0h13v24l-6-5h-7z" fill="#000" /><text x="45" y="9" fill="#ddd" font-size="11">0</text>
          <path d="M0 222H57" stroke="#888" />
          <path d="M57 222 120 170" stroke="#9a9a8a" />
          <circle cx="120" cy="170" r="3" fill="#3f3f3f" stroke="#888" />
          <path d="M57 222C120 170 183 66 246 66 290 66 322 127 374 127 390 127 403 123 417 119 431 115 445 111 459 111 527 111 572 191 626 191H683" fill="none" stroke="#52a050" stroke-width="1.3" />
          <path d="M486 26V262" stroke="#c9c410" stroke-width="3" />
          <path d="M472 0h28v14l-14 12-14-12z" fill="#ff0" /><text x="479" y="8" fill="#333" font-size="12">68</text>
          <g fill="#e8a32c"><rect x="243" y="63" width="6" height="6" /><rect x="414" y="116" width="6" height="6" /><rect x="623" y="188" width="6" height="6" /></g>
          <rect x="54" y="219" width="6" height="6" fill="#333" stroke="#fff" stroke-width="2" />
        </svg>
      </div>
    </div>
  </section>

  <!-- Export dialog -->
  <section class="dialog">
    <header>{@render icon("mLogo", 15)}<span>导出相机动画窗口</span>{@render caption()}</header>
    <button class="export">导出相机动画</button>
  </section>
</main>

<style>
  :global(body) {
    margin: 0;
    background: #444;
  }

  .desktop {
    position: relative;
    height: 100vh;
    overflow: hidden;
    background: #2a2a2a;
    color: #ccc;
    font: 13px/20px "Noto Sans", "Noto Sans CJK SC", sans-serif;
  }

  .desktop * {
    box-sizing: border-box;
  }

  button,
  input,
  select {
    font: inherit;
    color: inherit;
    border: 0;
    padding: 0;
    margin: 0;
    background: none;
    white-space: nowrap;
    outline: 0;
    border-radius: 0;
  }

  select {
    appearance: none;
    opacity: 1;
  }

  ul {
    list-style: none;
    margin: 0;
    padding: 0;
  }

  .ico {
    display: block;
    flex: none;
  }

  .backdrop {
    height: 366px;
    width: 610px;
    background: linear-gradient(90deg, #7a7a7a, #8c8c8c 80%, #555);
  }

  .tri {
    flex: none;
    width: 0;
    height: 0;
    border: 5px solid transparent;
    border-top: 6px solid #ccc;
    border-bottom: 0;
  }

  .tri.upward {
    border-top: 0;
    border-bottom: 6px solid #ccc;
  }

  .tri.leftward {
    border: 5px solid transparent;
    border-right: 6px solid #ccc;
    border-left: 0;
  }

  .tri.rightward {
    border: 5px solid transparent;
    border-left: 6px solid #ccc;
    border-right: 0;
  }

  .tri.tiny {
    border-width: 4px 3px 0;
    border-top-color: #aaa;
  }

  .tri.dark,
  .tri.tiny.dark {
    border-top-color: #222;
  }

  .caption {
    display: flex;
    margin-left: auto;
  }

  .caption button {
    width: 49px;
    display: flex;
    justify-content: center;
  }

  /* windows */
  .maya,
  .unreal,
  .explorer,
  .graphed,
  .dialog {
    position: absolute;
    display: flex;
    flex-direction: column;
    overflow: hidden;
  }

  /* ---- Maya ---- */
  .maya {
    top: 0;
    left: 611px;
    right: 0;
    bottom: 0;
    border-top: 4px solid #fff;
    background: #444;
  }

  .menubar {
    height: 30px;
    display: flex;
    align-items: center;
    padding-left: 10px;
    flex: none;
  }

  .mainmenu {
    display: flex;
    width: 896px;
    padding-bottom: 4px;
    justify-content: space-between;
  }

  .workspace {
    margin-left: auto;
    display: flex;
    align-items: center;
    gap: 8px;
  }

  .workspace select {
    width: 142px;
    height: 24px;
    padding-left: 4px;
    background: #575757;
  }

  .grip {
    flex: none;
    width: 6px;
    margin: 2px 0;
    align-self: stretch;
    background: radial-gradient(circle, #777 0 1px, transparent 1px) 0 0 / 3px 3px;
    opacity: 0.5;
  }

  .statusline {
    height: 30px;
    flex: none;
    display: flex;
    align-items: center;
    padding-left: 2px;
    border-bottom: 2px solid #373737;
    overflow: hidden;
  }

  .combo {
    position: relative;
    flex: none;
    background: #5a5a5a;
    height: 23px;
  }

  .combo::after {
    content: "";
    position: absolute;
    right: 5px;
    top: 9px;
    border: 5px solid transparent;
    border-top: 6px solid #ccc;
    border-bottom: 0;
  }

  .combo select {
    width: 100%;
    height: 100%;
    padding-left: 4px;
  }

  .mode {
    width: 104px;
    margin-left: 8px;
  }

  .sep {
    flex: none;
    width: 22px;
    height: 20px;
    background: linear-gradient(#888, #888) center / 2px 100% no-repeat;
  }

  .tool {
    flex: none;
    display: flex;
    align-items: center;
    justify-content: center;
    width: 25px;
    height: 26px;
  }

  .tool.on,
  .toolbox .on {
    background: #5285a6;
  }

  .statusline .tool[aria-label="drop"] {
    width: 14px;
  }

  .statusline .sep + .tool[aria-label="drop"] {
    width: 16px;
  }

  .field {
    flex: none;
    width: 106px;
    height: 23px;
    padding-left: 6px;
    border: 1px solid #4e4e4e;
    background: #414141;
  }

  .statusline .field {
    margin-right: 4px;
  }

  .shelf {
    height: 78px;
    flex: none;
    display: flex;
    padding: 4px 0 2px 2px;
    border-bottom: 3px solid #393939;
  }

  .shelfside {
    width: 22px;
    margin: 0 4px 0 7px;
    background: #373737;
    display: flex;
    flex-direction: column;
    align-items: center;
    justify-content: space-around;
  }

  .shelftabs {
    flex: 1;
    height: 21px;
    display: flex;
    gap: 1px;
    background: #373737;
  }

  .shelftabs button {
    padding: 0 12px;
    border-right: 1px solid #2d2d2d;
    background: #3b3b3b;
  }

  .shelftabs .active {
    background: #444;
  }

  .work {
    flex: 1;
    min-height: 0;
    display: flex;
  }

  .toolbox {
    width: 49px;
    flex: none;
    display: flex;
    flex-direction: column;
    align-items: center;
    gap: 2px;
    padding-top: 2px;
    border-right: 2px solid #373737;
  }

  .toolbox button {
    width: 38px;
    height: 38px;
    display: flex;
    align-items: center;
    justify-content: center;
  }

  .logo {
    margin-top: auto;
    padding-bottom: 6px;
  }

  .dots {
    width: 40px;
    height: 8px;
    flex: none;
    background: radial-gradient(circle, #777 0 1px, transparent 1px) 0 0 / 4px 4px;
    opacity: 0.5;
  }

  .dots.wide {
    width: 104px;
    height: 4px;
    margin: 0 auto;
  }

  .outliner {
    width: 324px;
    flex: none;
    display: flex;
    flex-direction: column;
    padding: 0 3px 6px 2px;
    border-right: 2px solid #373737;
  }

  .paneltabs {
    height: 21px;
    background: #373737;
    flex: none;
  }

  .paneltabs button {
    background: #444;
    height: 21px;
    padding: 0 11px;
  }

  .submenu {
    display: flex;
    gap: 16px;
    padding: 2px 10px 5px;
    flex: none;
  }

  .search {
    display: flex;
    align-items: center;
    gap: 8px;
    padding: 3px 3px 2px 6px;
  }

  .searchbox {
    flex: 1;
    height: 22px;
    display: flex;
    align-items: center;
    padding: 0 5px 0 3px;
    background: #2b2b2b;
  }

  .searchbox input {
    flex: 1;
    min-width: 0;
  }

  .searchbox input::placeholder {
    color: #888;
  }

  .treewrap {
    flex: 1;
    min-height: 0;
    display: flex;
  }

  .tree {
    flex: 1;
    margin-left: 3px;
    background: #373737;
  }

  .tree li {
    height: 21px;
    display: flex;
    align-items: center;
    gap: 4px;
    padding-left: 22px;
  }

  .tree .dim > span {
    color: #6c6c6c;
  }

  .selected {
    background: #5285a6;
    color: #fff;
  }

  .expander {
    width: 11px;
    height: 11px;
    display: flex;
  }

  .expander b {
    width: 11px;
    height: 11px;
    font: 11px/9px "Liberation Sans", sans-serif;
    text-align: center;
    border: 1px solid #999;
  }

  .vscroll {
    width: 15px;
    display: flex;
    flex-direction: column;
    align-items: center;
    gap: 4px;
    padding: 4px 0;
  }

  .vscroll span {
    flex: 1;
    width: 10px;
    border-radius: 4px;
    background: #5d5d5d;
  }

  .hscroll {
    height: 14px;
    flex: none;
    display: flex;
    align-items: center;
    gap: 5px;
    padding: 0 20px 0 5px;
  }

  .hscroll span {
    flex: 1;
    height: 11px;
    border-radius: 4px;
    background: #5d5d5d;
  }

  .view {
    flex: 1;
    min-width: 0;
    display: flex;
    flex-direction: column;
    padding: 2px 3px 4px 3px;
    border-right: 3px solid #373737;
  }

  .view .submenu {
    padding: 2px 9px 3px;
  }

  .viewtools {
    display: flex;
    align-items: center;
    height: 21px;
    flex: none;
    overflow: hidden;
  }

  .viewtools .tool {
    width: 20px;
    height: 21px;
  }

  .viewtools .sep {
    width: 13px;
    height: 14px;
  }

  .canvas {
    position: relative;
    flex: 1;
    min-height: 0;
    overflow: hidden;
    background: linear-gradient(#9a9fab, #989ca3 22%, #939698 50%, #8e8e8e 75%, #8c8c8c);
  }

  .hud {
    display: flex;
    justify-content: space-between;
    padding: 0 66px 0 17px;
    margin-top: -3px;
    color: #fff;
    font: bold 12px/21px "Liberation Sans", "Noto Sans CJK SC", sans-serif;
  }

  .hud table {
    border-spacing: 0;
    align-self: flex-start;
  }

  .hud th,
  .hud td {
    padding: 0;
    height: 21px;
    text-align: left;
  }

  .poly td {
    text-align: right;
    width: 71px;
  }

  .poly th {
    width: 47px;
  }

  .obj th {
    width: 144px;
  }

  .gate {
    position: absolute;
    left: 11.5%;
    right: 11.3%;
    top: 25.6%;
    bottom: 25.8%;
    border: 1px dotted #dfe5ec;
    background: linear-gradient(#71879f, #5a6f87 40%, #394757);
  }

  .figure {
    position: absolute;
    left: 51.8%;
    top: 54.4%;
    width: 150px;
  }

  .axis {
    position: absolute;
    left: 21px;
    bottom: 20px;
    width: 30px;
    font: bold 9px "Liberation Sans", sans-serif;
  }

  .camname {
    position: absolute;
    left: 0;
    right: 10px;
    bottom: 4px;
    text-align: center;
    color: #fff;
    font: bold 12px/21px "Liberation Sans", sans-serif;
  }

  .humanik {
    width: 267px;
    flex: none;
    padding: 7px 0 0 9px;
  }

  .ikhead {
    display: grid;
    grid-template-columns: 42px 1fr 134px;
    grid-template-rows: 24px 24px;
    gap: 3px 5px;
    margin-bottom: 8px;
  }

  .ikhead svg {
    grid-row: span 2;
    margin-top: 4px;
  }

  .ikhead label {
    text-align: right;
  }

  .ikhead select {
    background: #5a5a5a;
    padding-left: 3px;
  }

  .ikhead label.off {
    color: #999;
  }

  .ikhead select.off {
    background: #4a4a4a;
    color: #6e6e6e;
    padding-left: 8px;
  }

  .humanik h3 {
    display: flex;
    align-items: center;
    gap: 12px;
    height: 26px;
    margin: 0 0 6px 2px;
    padding-left: 8px;
    background: #5a5a5a;
    color: #bbb;
    font: inherit;
  }

  .humanik h3 .tri {
    border-width: 8px 7px 0;
    border-top-color: #eee;
  }

  .ikbuttons {
    display: flex;
    flex-direction: column;
    gap: 5px;
    margin: 0 2px 7px 34px;
  }

  .ikbuttons button {
    height: 29px;
    background: #5d5d5d;
    color: #eee;
  }

  .timerow {
    height: 102px;
    flex: none;
    display: flex;
    padding: 4px 0 4px 2px;
    border-top: 2px solid #373737;
    border-bottom: 2px solid #373737;
  }

  .timeline {
    position: relative;
    flex: 1;
    margin-left: 7px;
    height: 92px;
    padding: 0 5px;
    background: #2b2b2b;
    overflow: hidden;
  }

  .track {
    position: relative;
    height: 92px;
    border-bottom: 4px solid #4f82a3;
  }

  .track span {
    position: absolute;
  }

  .tick {
    top: 19px;
    bottom: 2px;
    width: 2px;
    background: #777;
  }

  .num {
    top: 0;
    padding-left: 1px;
    line-height: 18px;
    color: #7c7c7c;
  }

  .key {
    top: 2px;
    bottom: 0;
    width: 4px;
    background: #a11b1b;
  }

  .now {
    top: 0;
    bottom: 0;
    width: 7px;
    background: #555;
    color: #fff;
  }

  .now b {
    position: absolute;
    bottom: 3px;
    left: 0;
    font-weight: 400;
  }

  .pointer {
    position: absolute;
    left: 68.3%;
    top: 30px;
  }

  .frame {
    width: 106px;
    padding: 8px 0 0 13px;
    color: #6c6c6c;
  }

  .playback {
    display: flex;
    width: 150px;
    height: 30px;
    align-items: center;
    overflow: hidden;
  }

  .playback button {
    width: 25px;
    flex: none;
    padding-left: 6px;
  }

  .rangerow {
    height: 42px;
    flex: none;
    display: flex;
    align-items: center;
    gap: 9px;
    padding-left: 2px;
    border-bottom: 2px solid #373737;
  }

  .rangerow .grip {
    margin-right: -2px;
  }

  .numfield {
    width: 94px;
    height: 28px;
    padding-left: 6px;
    border-radius: 2px;
    background: #2b2b2b;
    flex: none;
  }

  .range {
    width: 288px;
    height: 28px;
    display: flex;
    align-items: center;
    gap: 4px;
    padding: 0 4px;
    border: 2px solid #373737;
    border-radius: 4px;
    background: #5d5d5d;
    flex: none;
  }

  .range i {
    width: 16px;
    height: 18px;
    border-radius: 4px;
    background: #969696;
  }

  .end {
    margin-left: auto;
  }

  .rangetools {
    display: flex;
    align-items: center;
    flex: 1;
    margin-left: -14px;
    min-width: 0;
    overflow: hidden;
  }

  .rangetools .field {
    width: 109px;
    height: 28px;
  }

  .rangetools .tool[aria-label="drop"] {
    width: 25px;
  }

  .fps {
    width: 109px;
    margin-left: 4px;
    color: #bbb;
  }

  .gapl {
    margin: 0 6px 0 12px;
  }

  .cmdrow {
    height: 37px;
    flex: none;
    display: flex;
    align-items: center;
    padding-left: 2px;
    border-bottom: 2px solid #373737;
  }

  .cmdrow label {
    padding: 0 12px 0 16px;
  }

  .cmdrow .numfield {
    width: 365px;
    height: 23px;
    margin-right: 9px;
  }

  .cmdrow output {
    flex: 1;
    height: 25px;
    padding: 2px 6px;
    background: #2b2b2b;
  }

  .helprow {
    height: 7px;
    display: flex;
    padding-left: 2px;
  }

  /* ---- Unreal ---- */
  .unreal {
    left: -60px;
    width: 670px;
    top: 740px;
    bottom: 0;
    background: #242424;
    color: #b4b4b4;
    font: 13px/20px Roboto, sans-serif;
  }

  .unreal button {
    display: flex;
    align-items: center;
    gap: 5px;
  }

  .utools {
    height: 32px;
    flex: none;
    display: flex;
    align-items: center;
    gap: 13px;
    padding-bottom: 3px;
    border-bottom: 2px solid #1a1a1a;
  }

  .unreal .add {
    width: 85px;
    height: 24px;
    padding-right: 14px;
    justify-content: flex-end;
    background: #383838;
    color: #ddd;
  }

  .saveall {
    margin: 0 10px 0 6px;
  }

  .fwd {
    margin: 0 -6px;
  }

  .ubody {
    flex: 1;
    min-height: 0;
    display: flex;
  }

  .usources {
    width: 181px;
    display: flex;
    gap: 6px;
    border-right: 2px solid #161616;
    padding-top: 40px;
    overflow: hidden;
  }

  .ulist {
    width: 161px;
    display: flex;
    flex-direction: column;
    gap: 4px;
  }

  .ulist button {
    height: 26px;
    flex: none;
    padding-left: 27px;
    border-radius: 2px;
    background: #373737;
    color: #7e7e7e;
  }

  .uscroll {
    width: 8px;
    height: 188px;
    background: #555;
    border-radius: 4px;
  }

  .uassets {
    flex: 1;
    min-width: 0;
    display: flex;
    flex-direction: column;
    overflow: hidden;
    padding-top: 10px;
  }

  .uassets p {
    margin: 0;
    white-space: nowrap;
  }

  .usearch {
    height: 22px;
    background: #0f0f0f;
  }

  .uassets .udrop {
    margin: auto 0;
    padding-top: 18px;
    text-align: right;
  }

  .uitems {
    padding: 0 0 3px 8px;
  }

  .ustatus {
    height: 38px;
    flex: none;
    display: flex;
    align-items: center;
    border-top: 4px solid #161616;
  }

  .ustatus button {
    height: 34px;
    padding: 0 12px 0 11px;
    border-right: 2px solid #171717;
  }

  .unreal .drawer {
    width: 136px;
    justify-content: flex-end;
  }

  .ustatus button:nth-child(3) {
    border: 0;
    padding: 0 14px;
    gap: 6px;
  }

  .ustatus input {
    width: 285px;
    height: 24px;
    padding-left: 10px;
    border-radius: 3px;
    background: #0f0f0f;
    font: 12px "DejaVu Sans Mono", monospace;
  }

  .ustatus input::placeholder {
    color: #555;
  }

  /* ---- Explorer ---- */
  .explorer {
    left: -8px;
    top: 0;
    width: 618px;
    background: #fff;
    color: #333;
    border-right: 1px solid #555;
  }

  .etitle {
    height: 22px;
    display: flex;
    align-items: flex-start;
    gap: 6px;
    line-height: 11px;
    color: #888;
  }

  .etitle .tri {
    margin: 5px 3px 0 2px;
  }

  .bar {
    width: 1px;
    height: 12px;
    background: #aaa;
  }

  .etabs {
    height: 28px;
    display: flex;
    border-bottom: 1px solid #e2e3e4;
  }

  .etabs .filetab {
    width: 14px;
    height: 24px;
    background: #0063b1;
  }

  .etabs button {
    width: 57px;
    height: 28px;
  }

  .etabs .active {
    width: 55px;
    background: #f5f6f7;
    border: 1px solid #e2e3e4;
    border-bottom: 0;
  }

  .ehelp {
    margin: 0 4px 0 auto;
    display: flex;
    align-items: center;
    gap: 8px;
  }

  .ehelp b {
    width: 17px;
    height: 17px;
    border-radius: 50%;
    background: #1361ad;
    color: #fff;
    text-align: center;
    line-height: 17px;
  }

  .ribbon {
    height: 116px;
    display: flex;
    background: #f5f6f7;
    border-bottom: 1px solid #dcdddd;
  }

  .group {
    display: flex;
    flex-direction: column;
    margin: 4px 0;
    border-right: 1px solid #e0e1e2;
  }

  .group small {
    font-size: 13px;
    text-align: center;
    line-height: 18px;
    color: #555;
  }

  .gbody {
    flex: 1;
    display: flex;
    padding-top: 4px;
    line-height: 19px;
  }

  .big {
    display: flex;
    flex-direction: column;
    align-items: center;
    align-self: flex-start;
    gap: 3px;
    line-height: 19px;
  }

  .faded {
    color: #777;
  }

  .clipg {
    width: 137px;
  }

  .clipg small {
    padding-right: 74px;
    text-align: right;
  }

  .pin {
    width: 20px;
    padding-top: 35px;
  }

  .clipg .big {
    width: 38px;
  }

  .pastecol {
    display: flex;
    flex-direction: column;
    gap: 5px;
    width: 50px;
    padding-left: 10px;
  }

  .smallcol {
    display: flex;
    flex-direction: column;
    gap: 8px;
  }

  .smallcol span {
    display: flex;
    align-items: center;
    gap: 3px;
  }

  .orgg {
    width: 163px;
  }

  .pair {
    display: flex;
    flex-direction: column;
    gap: 15px;
    padding: 10px 0 0 9px;
    width: 84px;
  }

  .pair button,
  .rows button {
    display: flex;
    align-items: center;
    gap: 3px;
    line-height: 20px;
  }

  .pair .tri {
    margin-left: 4px;
  }

  .pair.second {
    margin-bottom: 12px;
    padding-left: 6px;
    border-left: 1px solid #e0e1e2;
  }

  .newg {
    width: 89px;
  }

  .newg .big {
    width: 52px;
  }

  .openg {
    width: 91px;
  }

  .openg .big {
    width: 53px;
  }

  .selg {
    width: 91px;
  }

  .gbody.rows {
    flex-direction: column;
    gap: 3px;
    padding-left: 8px;
    padding-top: 1px;
  }

  .eaddr {
    height: 36px;
    display: flex;
    align-items: center;
    gap: 8px;
    padding: 0 12px 2px 24px;
  }

  .path {
    width: 293px;
    height: 24px;
    display: flex;
    align-items: center;
    gap: 8px;
    padding-left: 3px;
    border: 1px solid #d9d9d9;
  }

  .path a {
    color: #333;
    text-decoration: none;
  }

  .pathend {
    margin-left: auto;
  }

  .path button {
    width: 19px;
    height: 22px;
    padding-left: 2px;
    margin-left: -5px;
    border-left: 1px solid #d9d9d9;
  }

  .esearch {
    flex: 1;
    display: flex;
    align-items: center;
    height: 24px;
    padding: 0 8px 0 10px;
    margin-left: 4px;
    border: 1px solid #d9d9d9;
  }

  .esearch input {
    flex: 1;
    min-width: 0;
  }

  .esearch input::placeholder {
    color: #777;
  }

  .efiles {
    display: flex;
    height: 128px;
  }

  .enav {
    width: 13px;
    margin-right: 5px;
    background: #f0f0f0;
  }

  .enav span {
    display: block;
    height: 18px;
    margin-top: 75px;
    background: #cdcdcd;
  }

  .elist {
    flex: 1;
    min-width: 0;
    display: flex;
    flex-direction: column;
  }

  .cols {
    display: grid;
    grid-template-columns: 289px 154px 128px 1fr;
    height: 30px;
    overflow: hidden;
    line-height: 30px;
    color: #666;
    white-space: nowrap;
  }

  .cols span {
    border-right: 1px solid #e5e5e5;
    padding-left: 7px;
  }

  .cols span:first-child {
    display: flex;
    gap: 92px;
    padding-left: 17px;
  }

  .cols span:last-child {
    border: 0;
  }

  .elist p {
    flex: 1;
    margin: 0;
    padding-top: 14px;
    text-align: center;
    color: #6d6d6d;
  }

  .escroll {
    height: 17px;
    display: flex;
    align-items: center;
    gap: 4px;
    padding: 0 2px;
    background: #f0f0f0;
  }

  .escroll span {
    height: 16px;
    width: 505px;
    margin-right: auto;
    background: #cdcdcd;
  }

  .explorer footer {
    height: 26px;
    display: flex;
    align-items: center;
    gap: 4px;
    padding: 0 9px 0 4px;
  }

  .explorer footer span {
    margin-right: auto;
  }

  .explorer footer .on {
    width: 23px;
    height: 25px;
    padding-left: 2px;
    border: 1px solid #56b0e0;
    background: #b9e2f8;
  }

  /* ---- Graph editor ---- */
  .graphed {
    left: -4px;
    top: 365px;
    width: 940px;
    height: 373px;
    background: #373737;
    box-shadow: 0 0 4px #222;
  }

  .graphed header {
    height: 32px;
    flex: none;
    display: flex;
    align-items: center;
    background: #fff;
  }

  .gtabs {
    height: 22px;
    flex: none;
    display: flex;
    gap: 2px;
  }

  .gtabs button {
    width: 86px;
    color: #8a8a8a;
    background: #3a3a3a;
  }

  .gtabs .active {
    width: 50px;
    padding-right: 12px;
    background: #444;
    color: #ddd;
    display: flex;
    align-items: center;
    justify-content: flex-end;
  }

  .gpanel {
    flex: 1;
    min-height: 0;
    display: flex;
    flex-direction: column;
    background: #444;
    border: 1px solid #777;
    border-left: 0;
    margin-right: 2px;
  }

  .gmenu {
    height: 25px;
    display: flex;
    align-items: center;
    gap: 16px;
    padding-bottom: 4px;
    flex: none;
  }

  .gtools {
    height: 28px;
    flex: none;
    display: flex;
    align-items: center;
    padding-left: 6px;
    overflow: hidden;
  }

  .gtools .tool {
    width: 27px;
  }

  .gtools .tool:nth-last-child(-n + 6) {
    width: 24px;
  }

  .gtools .sep {
    width: 4px;
    background: linear-gradient(#333, #333) center / 2px 100% no-repeat;
  }

  .gtools label {
    flex: none;
    margin-right: 3px;
    white-space: nowrap;
  }

  .stat {
    flex: none;
    width: 94px;
    height: 22px;
    padding-left: 5px;
    margin-right: 7px;
    background: #2b2b2b;
    border-radius: 2px;
  }

  .stat.wide {
    width: 118px;
  }

  .gmain {
    flex: 1;
    min-height: 0;
    display: flex;
  }

  .gleft {
    width: 243px;
    flex: none;
    display: flex;
    flex-direction: column;
    padding-top: 5px;
  }

  .gleft .searchbox {
    flex: none;
    margin-bottom: 11px;
    padding-left: 2px;
  }

  .gleft .vscroll {
    width: 13px;
  }

  .chans {
    flex: 1;
    background: #373737;
    overflow: hidden;
  }

  .chans li {
    height: 21px;
    display: flex;
    align-items: center;
    gap: 9px;
    padding-left: 26px;
  }

  .chans .root {
    height: 23px;
    padding-left: 10px;
    background: #424e5b;
  }

  .chans li > i {
    width: 7px;
    height: 7px;
  }

  .chans .selected > i {
    background: #fff;
  }

  .gleft .hscroll {
    padding: 0 16px 0 0;
    height: 12px;
  }

  .splitter {
    width: 5px;
    margin: 87px 2px 90px;
    background: radial-gradient(circle, #777 0 1px, transparent 1px) 0 0 / 4px 4px;
    opacity: 0.5;
  }

  .graph {
    flex: none;
    width: 683px;
    align-self: flex-start;
  }

  .gnum {
    fill: #8c8c8c;
    font-size: 12px;
  }

  .gval {
    fill: #999;
    font-size: 12px;
    font-weight: 700;
    text-anchor: end;
  }

  /* ---- Export dialog ---- */
  .dialog {
    left: 80px;
    top: 755px;
    width: 285px;
    height: 98px;
    background: #444;
    box-shadow: 0 2px 5px #111;
  }

  .dialog header {
    height: 32px;
    display: flex;
    align-items: center;
    gap: 6px;
    padding: 0 4px 0 10px;
    background: #fff;
    color: #888;
    white-space: nowrap;
  }

  .dialog header span:first-of-type {
    margin-right: -4px;
  }

  .export {
    height: 30px;
    margin: 0 1px;
    background: #5d5d5d;
    color: #eee;
  }
</style>
